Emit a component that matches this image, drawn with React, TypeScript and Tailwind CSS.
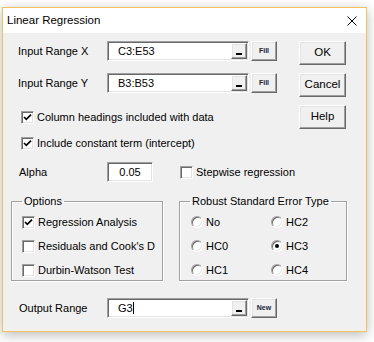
import React from "react";

const raised =
  "bg-[#f0f0f0] border border-t-white border-l-white border-r-[#696969] border-b-[#696969] shadow-[inset_-1px_-1px_0_#a0a0a0,inset_1px_1px_0_#e3e3e3]";
const sunken =
  "bg-white border border-t-[#a0a0a0] border-l-[#a0a0a0] border-r-white border-b-white shadow-[inset_1px_1px_0_#696969,inset_-1px_-1px_0_#e3e3e3]";

const Check = ({ checked }: { checked?: boolean }) => (
  <div className={`w-[13px] h-[13px] shrink-0 flex items-center justify-center ${sunken}`}>
    {checked && (
      <svg width="9" height="9" viewBox="0 0 9 9">
        <polyline points="1,4 3.3,6.3 8,1.6" fill="none" stroke="#000" strokeWidth="1.7" />
      </svg>
    )}
  </div>
);

const CheckRow = ({ label, checked }: { label: string; checked?: boolean }) => (
  <div className="flex items-center h-[16px]">
    <Check checked={checked} />
    <span className="ml-[3px]">{label}</span>
  </div>
);

const Radio = ({ label, selected }: { label: string; selected?: boolean }) => (
  <div className="flex items-center h-[16px]">
    <div
      className={`w-[12px] h-[12px] rounded-full shrink-0 flex items-center justify-center ${sunken}`}
    >
      {selected && <div className="w-[4px] h-[4px] rounded-full bg-black" />}
    </div>
    <span className="ml-[3px]">{label}</span>
  </div>
);

const RangeBox = ({ value, cursor }: { value: string; cursor?: boolean }) => (
  <div className={`w-[142px] h-[20px] flex ${sunken} p-[1px]`}>
    <div className="flex-1 flex items-center pl-[9px]">
      {value}
      {cursor && <span className="inline-block w-px h-[12px] bg-black" />}
    </div>
    <div className={`w-[16px] h-full flex items-end justify-center pb-[2px] ${raised}`}>
      <div className="w-[6px] h-[2px] bg-black mb-[1px]" />
    </div>
  </div>
);

const SmallBtn = ({ label }: { label: string }) => (
  <div
    className={`ml-[2px] w-[26px] h-[20px] flex items-center justify-center text-[7px] font-bold text-[#1a1a3a] ${raised}`}
  >
    {label}
  </div>
);

const Btn = ({ label }: { label: string }) => (
  <div className={`w-[47px] h-[24px] flex items-center justify-center text-[11.5px] ${raised}`}>
    {label}
  </div>
);

export default function App() {
  return (
    <div className="w-[374px] h-[342px] bg-white pt-[7px] pl-[2px] font-['Liberation_Sans',Arial,sans-serif] text-[11px] text-black">
      <div className="w-[365px] h-[325px] border border-[#f3c15c] flex flex-col shadow-[0_3px_12px_rgba(0,0,0,0.28)]">
        <div className="h-[25px] bg-white flex items-center justify-between pl-[4px] pr-[9px]">
          <span className="text-[11.5px]">Linear Regression</span>
          <svg width="10" height="10" viewBox="0 0 10 10">
            <path d="M0.5 0.5 L9.5 9.5 M9.5 0.5 L0.5 9.5" stroke="#000" strokeWidth="1" />
          </svg>
        </div>

        <div className="flex-1 bg-[#f0f0f0]">
          <div className="flex items-start mt-[8px] pl-[15px]">
            <div className="w-[89px] h-[20px] flex items-center">Input Range X</div>
            <RangeBox value="C3:E53" />
            <SmallBtn label="Fill" />
            <div className="ml-[22px]">
              <Btn label="OK" />
            </div>
          </div>

          <div className="flex items-start mt-[8px] pl-[15px]">
            <div className="w-[89px] h-[20px] flex items-center">Input Range Y</div>
            <RangeBox value="B3:B53" />
            <SmallBtn label="Fill" />
            <div className="ml-[22px]">
              <Btn label="Cancel" />
            </div>
          </div>

          <div className="flex items-center mt-[8px] pl-[18px]">
            <div className="w-[278px]">
              <CheckRow label="Column headings included with data" checked />
            </div>
            <Btn label="Help" />
          </div>

          <div className="mt-[6px] pl-[18px]">
            <CheckRow label="Include constant term (intercept)" checked />
          </div>

          <div className="flex items-center mt-[11px] pl-[16px]">
            <div className="w-[88px]">Alpha</div>
            <div className={`w-[46px] h-[20px] flex items-center justify-center ${sunken}`}>0.05</div>
            <div className="ml-[27px]">
              <CheckRow label="Stepwise regression" />
            </div>
          </div>

          <div className="flex mt-[13px] pl-[8px] gap-[16px]">
            <fieldset className="w-[152px] h-[86px] border border-[#a0a0a0] shadow-[1px_1px_0_#fff,inset_1px_1px_0_#fff] pl-[10px]">
              <legend className="px-[2px] leading-[13px]">Options</legend>
              <div className="flex flex-col gap-[8px] mt-[6px]">
                <CheckRow label="Regression Analysis" checked />
                <CheckRow label="Residuals and Cook's D" />
                <CheckRow label="Durbin-Watson Test" />
              </div>
            </fieldset>
            <fieldset className="w-[168px] h-[86px] border border-[#a0a0a0] shadow-[1px_1px_0_#fff,inset_1px_1px_0_#fff] pl-[10px]">
              <legend className="px-[2px] leading-[13px]">Robust Standard Error Type</legend>
              <div className="grid grid-cols-[80px_auto] gap-y-[8px] mt-[6px] ml-[1px]">
                <Radio label="No" />
                <Radio label="HC2" />
                <Radio label="HC0" />
                <Radio label="HC3" selected />
                <Radio label="HC1" />
                <Radio label="HC4" />
              </div>
            </fieldset>
          </div>

          <div className="flex items-center mt-[17px] pl-[16px]">
            <div className="w-[88px]">Output Range</div>
            <RangeBox value="G3" cursor />
            <SmallBtn label="New" />
          </div>
        </div>
      </div>
    </div>
  );
}
